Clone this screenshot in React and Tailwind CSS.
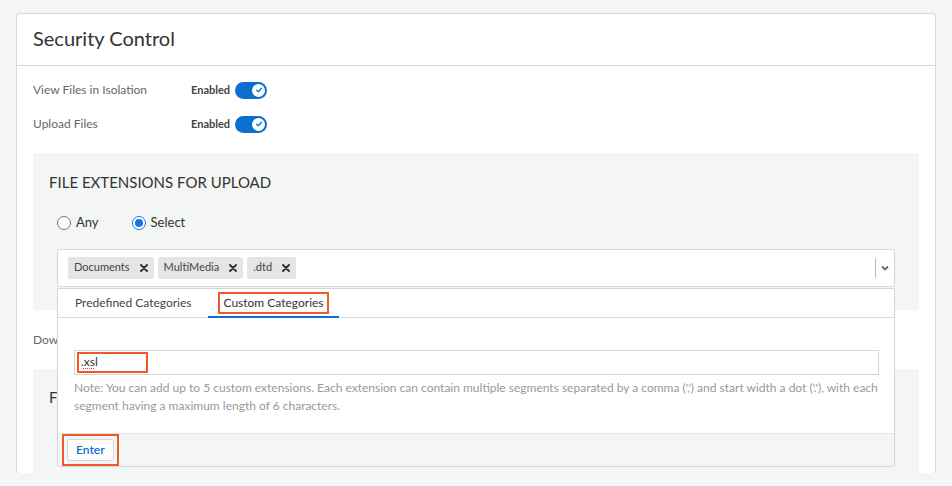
import React from "react";

const font = { fontFamily: "Lato, 'Open Sans', sans-serif" };

const Toggle = () => (
  <span className="relative inline-flex h-[17px] w-[32px] items-center rounded-full bg-[#0b6fd0]">
    <span className="absolute right-[2px] flex h-[13px] w-[13px] items-center justify-center rounded-full bg-white">
      <svg width="8" height="8" viewBox="0 0 10 10">
        <path d="M2 5.2 L4.2 7.2 L8 2.8" fill="none" stroke="#0b6fd0" strokeWidth="1.6" strokeLinecap="round" strokeLinejoin="round" />
      </svg>
    </span>
  </span>
);

const Radio = ({ checked, label }) => (
  <label className="flex items-center gap-[5px] text-[13px] text-[#333]">
    {checked ? (
      <span className="flex h-[14px] w-[14px] items-center justify-center rounded-full border border-[#1a73e8] bg-white">
        <span className="h-[8px] w-[8px] rounded-full bg-[#1a73e8]" />
      </span>
    ) : (
      <span className="h-[14px] w-[14px] rounded-full border border-[#767676] bg-white" />
    )}
    {label}
  </label>
);

const Chip = ({ label }) => (
  <span className="flex h-[22px] items-center gap-[10px] rounded-[2px] bg-[#e4e6e6] pl-[6px] pr-[6px] text-[11px] text-[#444]">
    {label}
    <svg width="8" height="8" viewBox="0 0 8 8">
      <path d="M1 1 L7 7 M7 1 L1 7" stroke="#333" strokeWidth="1.9" strokeLinecap="round" />
    </svg>
  </span>
);

const SettingRow = ({ label }) => (
  <div className="flex h-[34px] items-center">
    <span className="w-[158px] text-[12px] text-[#666]">{label}</span>
    <span className="mr-[5px] text-[11px] font-bold text-[#444]">Enabled</span>
    <Toggle />
  </div>
);

export default function App() {
  return (
    <div className="h-[486px] w-[952px] overflow-hidden bg-[#f4f5f5] pl-[16px] pt-[13px]" style={font}>
      <div className="w-[920px] rounded-t-[4px] border border-b-0 border-[#d9dbdb] bg-white">
        <div className="flex h-[52px] items-center border-b border-[#d9dbdb] px-[16px] pb-[4px]">
          <h1 className="text-[20px] text-[#333]">Security Control</h1>
        </div>

        <div className="px-[16px] pt-[7px]">
          <SettingRow label="View Files in Isolation" />
          <SettingRow label="Upload Files" />

          <div className="mt-[12px] h-[157px] w-[886px] bg-[#f4f5f5] pt-[19px]">
            <h2 className="pl-[16px] text-[15px] leading-[20px] text-[#333]">FILE EXTENSIONS FOR UPLOAD</h2>
            <div className="mt-[21px] flex items-center gap-[33px] pl-[24px]">
              <Radio label="Any" />
              <Radio checked label="Select" />
            </div>

            <div className="relative ml-[24px] mt-[16px] w-[838px]">
              <div className="flex h-[38px] items-center rounded-[3px] border border-[#d4d6d6] bg-white pl-[10px] pr-[4px]">
                <div className="flex flex-1 items-center gap-[4px]">
                  <Chip label="Documents" />
                  <Chip label="MultiMedia" />
                  <Chip label=".dtd" />
                </div>
                <span className="h-[20px] w-px bg-[#bbb]" />
                <svg className="ml-[4px]" width="10" height="10" viewBox="0 0 10 10">
                  <path d="M2 3.5 L5 6.5 L8 3.5" fill="none" stroke="#666" strokeWidth="1.8" />
                </svg>
              </div>

              <div className="absolute left-0 top-[39px] z-10 h-[179px] w-[838px] overflow-hidden rounded-b-[3px] border border-[#d4d6d6] bg-white">
                <div className="flex h-[29px] border-b border-[#d9dbdb] text-[12px] text-[#444]">
                  <div className="flex items-center px-[17px]">Predefined Categories</div>
                  <div className="relative flex items-center px-[10px]">
                    <span className="border-2 border-[#f05a28] px-[3px] leading-[18px] text-[#333]">Custom Categories</span>
                    <span className="absolute bottom-[-1px] left-0 right-0 h-[2px] bg-[#0b6fd0]" />
                  </div>
                </div>

                <div className="px-[16px] pt-[32px]">
                  <div className="relative flex h-[25px] w-[805px] items-center border border-[#d4d6d6] pl-[6px] text-[12px] text-[#333]">
                    <span>
                      .<span className="underline decoration-red-500 decoration-dotted underline-offset-2">xs</span>l
                    </span>
                    <span className="absolute left-[2px] top-[1px] h-[21px] w-[71px] border-2 border-[#f05a28]" />
                  </div>
                  <p className="mt-[4px] w-[805px] text-[12px] leading-[18px] text-[#999]">
                    Note: You can add up to 5 custom extensions. Each extension can contain multiple segments separated by a comma (',') and start width a dot ('.'), with each segment having a maximum length of 6 characters.
                  </p>
                </div>

                <div className="absolute bottom-0 left-0 right-0 flex h-[33px] items-center border-t border-[#e2e4e4] bg-[#f4f5f5] pl-[4px]">
                  <span className="border-2 border-[#f05a28] p-[3px]">
                    <button className="block h-[22px] rounded-[3px] border border-[#d4d6d6] bg-white px-[8px] text-[12px] font-semibold text-[#0b6fd0]">
                      Enter
                    </button>
                  </span>
                </div>
              </div>
            </div>
          </div>

          <div className="flex h-[59px] items-center text-[12px] text-[#666]">Download Files</div>

          <div className="h-[104px] w-[886px] bg-[#f4f5f5] pt-[18px]">
            <h2 className="pl-[16px] text-[15px] leading-[20px] text-[#333]">FILE EXTENSIONS FOR DOWNLOAD</h2>
          </div>
        </div>
      </div>
    </div>
  );
}
